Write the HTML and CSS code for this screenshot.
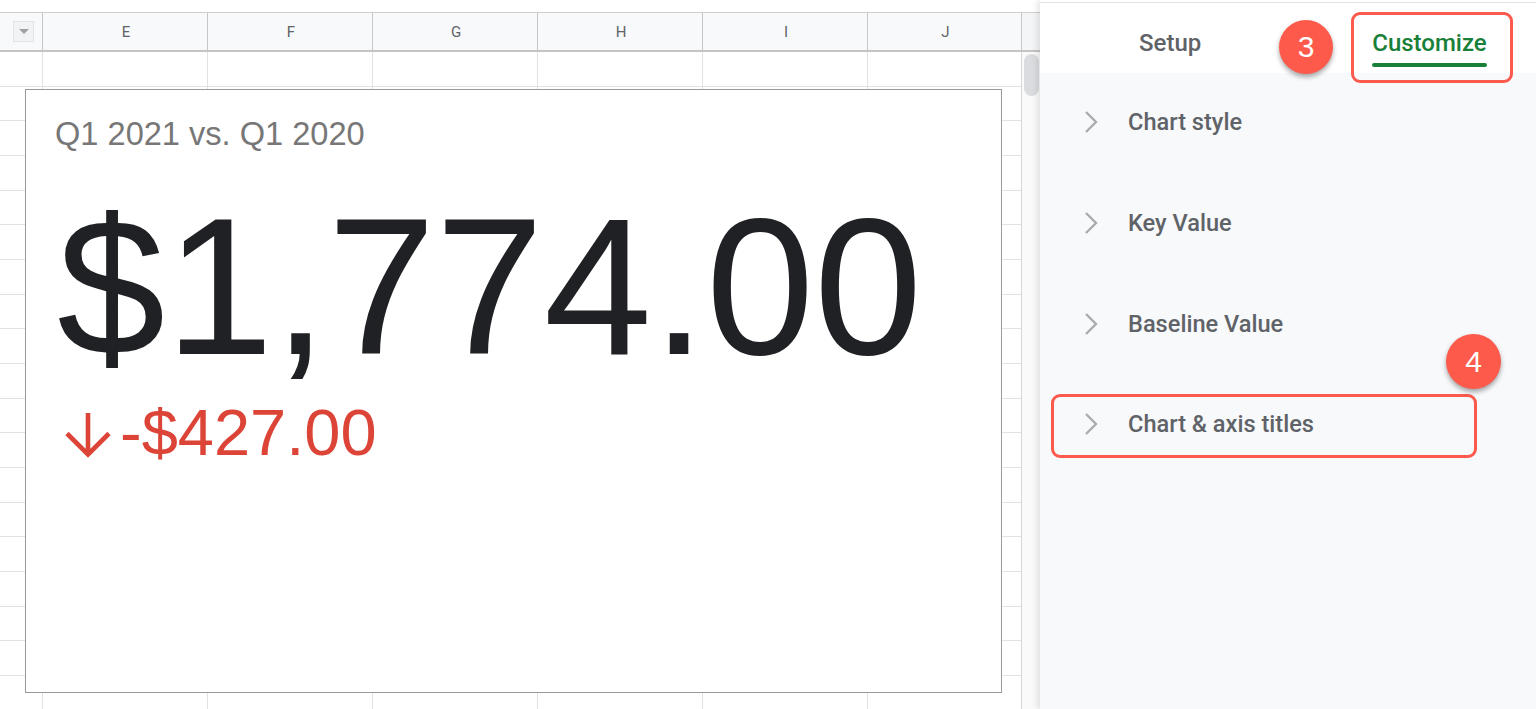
FILE: index.html
```html
<!DOCTYPE html>
<html lang="en">
<head>
<meta charset="utf-8">
<title>Scorecard chart – Customize</title>
<link rel="stylesheet" href="styles.css">
</head>
<body>
<div class="app">
  <div class="sheet">
    <div class="sheet-top"></div>
    <div class="col-head">
      <div class="hcell corner"><span class="corner-btn"><span class="tri"></span></span></div>
      <div class="hcell">E</div>
      <div class="hcell">F</div>
      <div class="hcell">G</div>
      <div class="hcell">H</div>
      <div class="hcell">I</div>
      <div class="hcell last">J</div>
    </div>
    <div class="grid">
      <div class="gcol corner"></div>
      <div class="gcol"></div>
      <div class="gcol"></div>
      <div class="gcol"></div>
      <div class="gcol"></div>
      <div class="gcol"></div>
      <div class="gcol last"></div>
    </div>
    <div class="chart">
      <div class="chart-title">Q1 2021 vs. Q1 2020</div>
      <div class="key-value">$1,774.00</div>
      <div class="delta">
        <svg class="delta-arrow" width="64" height="66" viewBox="0 0 64 66" aria-hidden="true">
          <path d="M35 13 V55 M14 33.5 L35 54.5 L56 33.5" fill="none" stroke="#db4437" stroke-width="4.6" stroke-linecap="butt" stroke-linejoin="miter"/>
        </svg>
        <span>-$427.00</span>
      </div>
    </div>
  </div>
  <div class="scroll">
    <div class="scroll-head"></div>
    <div class="scroll-track"><div class="thumb"></div></div>
  </div>
  <div class="panel">
    <div class="tabs">
      <div class="tab">Setup<span class="ink"></span></div>
      <div class="tab active">Customize<span class="ink"></span></div>
      <div class="mark-box mark-tab"></div>
      <div class="badge badge-3">3</div>
    </div>
    <div class="sections">
      <div class="section">
        <svg class="chev" width="16" height="24" viewBox="0 0 16 24" aria-hidden="true"><path d="M3 2 L13 12 L3 22" fill="none" stroke="#a9abae" stroke-width="2.4"/></svg>
        <span>Chart style</span>
      </div>
      <div class="section">
        <svg class="chev" width="16" height="24" viewBox="0 0 16 24" aria-hidden="true"><path d="M3 2 L13 12 L3 22" fill="none" stroke="#a9abae" stroke-width="2.4"/></svg>
        <span>Key Value</span>
      </div>
      <div class="section">
        <svg class="chev" width="16" height="24" viewBox="0 0 16 24" aria-hidden="true"><path d="M3 2 L13 12 L3 22" fill="none" stroke="#a9abae" stroke-width="2.4"/></svg>
        <span>Baseline Value</span>
      </div>
      <div class="section">
        <svg class="chev" width="16" height="24" viewBox="0 0 16 24" aria-hidden="true"><path d="M3 2 L13 12 L3 22" fill="none" stroke="#a9abae" stroke-width="2.4"/></svg>
        <span>Chart &amp; axis titles</span>
      </div>
      <div class="mark-box mark-section"></div>
      <div class="badge badge-4">4</div>
    </div>
  </div>
</div>
</body>
</html>
```

FILE: styles.css
```css
* { box-sizing: border-box; }

html, body {
  margin: 0;
  padding: 0;
  background: #ffffff;
}

body {
  width: 1536px;
  height: 709px;
  overflow: hidden;
  font-family: Roboto, "Liberation Sans", Arial, sans-serif;
}

.app {
  display: flex;
  height: 709px;
}

/* ---------- spreadsheet ---------- */
.sheet {
  position: relative;
  width: 1022px;
  flex: none;
  display: flex;
  flex-direction: column;
}

.sheet-top {
  height: 12px;
  background: #fff;
}

.col-head {
  display: flex;
  height: 40px;
  border-top: 1px solid #cfcfcf;
  border-bottom: 2px solid #c4c4c4;
  background: #f8f9fa;
}

.hcell {
  width: 165px;
  flex: none;
  border-right: 1px solid #c6c6c6;
  display: flex;
  align-items: center;
  justify-content: center;
  font-size: 15px;
  color: #5f6368;
  padding-top: 1px;
  padding-left: 2px;
}

.hcell.corner { width: 43px; justify-content: flex-start; padding-left: 13px; padding-top: 0; }
.hcell.last { width: 154px; border-right: 1px solid #c6c6c6; }

.corner-btn {
  width: 21px;
  height: 21px;
  border: 1px solid #e3e3e3;
  background: #f1f3f4;
  display: flex;
  align-items: center;
  justify-content: center;
}

.tri {
  width: 0;
  height: 0;
  border-left: 5px solid transparent;
  border-right: 5px solid transparent;
  border-top: 5px solid #a0a0a0;
}

.grid {
  flex: 1;
  display: flex;
  background: repeating-linear-gradient(to bottom,
    transparent 0, transparent 33.67px,
    #e2e2e2 33.67px, #e2e2e2 34.67px);
}

.gcol {
  width: 165px;
  flex: none;
  border-right: 1px solid #e2e2e2;
}
.gcol.corner { width: 43px; }
.gcol.last { width: 154px; border-right: 1px solid #d6d6d6; }

/* floating scorecard chart over the cells */
.chart {
  position: absolute;
  left: 25px;
  top: 89px;
  width: 977px;
  height: 604px;
  background: #fff;
  border: 1px solid #9a9a9a;
  padding: 28px 0 0 28px;
  font-family: "Liberation Sans", Arial, sans-serif;
  display: flex;
  flex-direction: column;
}

.chart-title {
  font-size: 32.6px;
  line-height: 32px;
  color: #777777;
  margin-left: 1px;
}

.key-value {
  margin-top: 40px;
  font-size: 194.5px;
  line-height: 194px;
  color: #202124;
  margin-left: 3px;
  white-space: nowrap;
}

.delta {
  margin-top: 16px;
  display: flex;
  align-items: flex-start;
  height: 66px;
  color: #db4437;
  font-size: 65px;
  line-height: 66px;
}

.delta-arrow { flex: none; margin-left: -1px; margin-right: 3px; }

/* ---------- scrollbar column ---------- */
.scroll {
  width: 18px;
  flex: none;
  display: flex;
  flex-direction: column;
}
.scroll-head {
  margin-top: 12px;
  background: #f4f5f6;
  border-top: 1px solid #cfcfcf;
  border-bottom: 2px solid #c4c4c4;
  height: 40px;
}
.scroll-track {
  flex: 1;
  background: #fafafa;
  padding: 2px 1px 0 2px;
}
.thumb {
  width: 15px;
  height: 42px;
  border-radius: 8px;
  background: #dadce0;
}

/* ---------- side panel ---------- */
.panel {
  flex: 1;
  position: relative;
  background: #f8f9fa;
  box-shadow: -3px 0 6px rgba(0, 0, 0, 0.10);
  display: flex;
  flex-direction: column;
  font-family: Roboto, "Liberation Sans", Arial, sans-serif;
}

.tabs {
  position: relative;
  height: 73px;
  flex: none;
  background-color: #fff;
  background-image: linear-gradient(#e3e3e3, #e3e3e3);
  background-size: 100% 1px;
  background-position: 0 2px;
  background-repeat: no-repeat;
  display: flex;
  align-items: flex-start;
  padding-left: 93px;
  gap: 157px;
}

.tab {
  display: flex;
  flex-direction: column;
  align-items: center;
  padding: 29px 6px 0;
  font-size: 24px;
  line-height: 28px;
  font-weight: 500;
  color: #5f6368;
}

.tab .ink {
  align-self: stretch;
  height: 4px;
  margin-top: 6px;
  border-radius: 3px;
  background: transparent;
}

.tab.active { color: #188038; padding: 29px 8px 0; }
.tab.active .ink { background: #188038; }

.sections {
  position: relative;
  display: flex;
  flex-direction: column;
  margin-top: -1px;
}

.section {
  height: 100.67px;
  display: flex;
  align-items: center;
  padding-left: 43px;
  gap: 29px;
  font-size: 23.6px;
  font-weight: 500;
  color: #5f6368;
}

.chev { flex: none; }

/* ---------- annotation overlays ---------- */
.mark-box {
  position: absolute;
  border: 3px solid #fb5a4c;
  border-radius: 9px;
}

.mark-tab {
  left: 311px;
  top: 12px;
  width: 162px;
  height: 71px;
}

.mark-section {
  left: 11px;
  top: 322px;
  width: 426px;
  height: 64px;
}

.badge {
  position: absolute;
  width: 54px;
  height: 54px;
  border-radius: 50%;
  background: #fd5a4b;
  color: #fff;
  font-family: "Liberation Sans", Arial, sans-serif;
  font-size: 30px;
  display: flex;
  align-items: center;
  justify-content: center;
  box-shadow: 0 3px 5px rgba(0, 0, 0, 0.35);
}

.badge-3 { left: 239px; top: 20px; }
.badge-4 { left: 406px; top: 262px; width: 55px; height: 55px; }
```
